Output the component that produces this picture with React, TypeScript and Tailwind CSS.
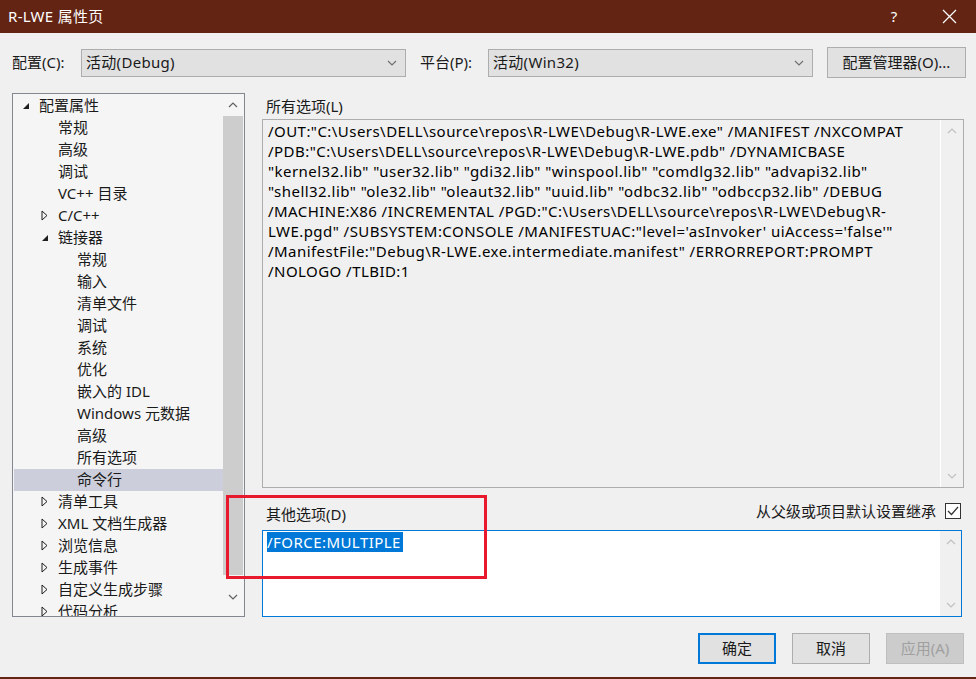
import React from "react";

type TreeItem = {
  label: string;
  level: 0 | 1 | 2;
  expander?: "open" | "closed";
  selected?: boolean;
};

const treeItems: TreeItem[] = [
  { label: "配置属性", level: 0, expander: "open" },
  { label: "常规", level: 1 },
  { label: "高级", level: 1 },
  { label: "调试", level: 1 },
  { label: "VC++ 目录", level: 1 },
  { label: "C/C++", level: 1, expander: "closed" },
  { label: "链接器", level: 1, expander: "open" },
  { label: "常规", level: 2 },
  { label: "输入", level: 2 },
  { label: "清单文件", level: 2 },
  { label: "调试", level: 2 },
  { label: "系统", level: 2 },
  { label: "优化", level: 2 },
  { label: "嵌入的 IDL", level: 2 },
  { label: "Windows 元数据", level: 2 },
  { label: "高级", level: 2 },
  { label: "所有选项", level: 2 },
  { label: "命令行", level: 2, selected: true },
  { label: "清单工具", level: 1, expander: "closed" },
  { label: "XML 文档生成器", level: 1, expander: "closed" },
  { label: "浏览信息", level: 1, expander: "closed" },
  { label: "生成事件", level: 1, expander: "closed" },
  { label: "自定义生成步骤", level: 1, expander: "closed" },
  { label: "代码分析", level: 1, expander: "closed" },
];

const indent = ["pl-[8px]", "pl-[27px]", "pl-[46px]"];

const allOptions = [
  '/OUT:"C:\\Users\\DELL\\source\\repos\\R-LWE\\Debug\\R-LWE.exe" /MANIFEST /NXCOMPAT',
  '/PDB:"C:\\Users\\DELL\\source\\repos\\R-LWE\\Debug\\R-LWE.pdb" /DYNAMICBASE',
  '"kernel32.lib" "user32.lib" "gdi32.lib" "winspool.lib" "comdlg32.lib" "advapi32.lib"',
  '"shell32.lib" "ole32.lib" "oleaut32.lib" "uuid.lib" "odbc32.lib" "odbccp32.lib" /DEBUG',
  '/MACHINE:X86 /INCREMENTAL /PGD:"C:\\Users\\DELL\\source\\repos\\R-LWE\\Debug\\R-',
  "LWE.pgd\" /SUBSYSTEM:CONSOLE /MANIFESTUAC:\"level='asInvoker' uiAccess='false'\"",
  '/ManifestFile:"Debug\\R-LWE.exe.intermediate.manifest" /ERRORREPORT:PROMPT',
  "/NOLOGO /TLBID:1",
];

const Chevron = ({ dir, color = "#606060" }: { dir: "up" | "down"; color?: string }) => (
  <svg width="10" height="6" viewBox="0 0 10 6">
    <polyline
      points={dir === "up" ? "1,5 5,1 9,5" : "1,1 5,5 9,1"}
      fill="none"
      stroke={color}
      strokeWidth="1.2"
    />
  </svg>
);

const Expander = ({ kind }: { kind: "open" | "closed" }) =>
  kind === "open" ? (
    <svg width="8" height="8" viewBox="0 0 8 8">
      <polygon points="7,1 7,7 1,7" fill="#1e1e1e" />
    </svg>
  ) : (
    <svg width="7" height="11" viewBox="0 0 7 11">
      <polygon points="1,1 6,5.5 1,10" fill="none" stroke="#1e1e1e" strokeWidth="1" />
    </svg>
  );

const ComboBox = ({ value }: { value: string }) => (
  <div className="w-[325px] h-[28px] bg-[#e1e1e1] border border-[#adadad] flex items-center pl-[4px] pr-[8px]">
    <span className="flex-1 tracking-[0.3px]">{value}</span>
    <Chevron dir="down" color="#707070" />
  </div>
);

const App = () => {
  return (
    <div
      className="relative w-[976px] h-[679px] bg-[#f0f0f0] flex flex-col overflow-hidden text-[15px] text-[#1a1a1a] border-b-2 border-[#632414]"
      style={{ fontFamily: '"Noto Sans", "Noto Sans CJK SC", sans-serif' }}
    >
      {/* Title bar */}
      <div className="h-[33px] shrink-0 bg-[#632414] flex items-center pl-[8px] pb-[1px] text-white">
        <span className="flex-1 tracking-[0.3px]">R-LWE 属性页</span>
        <span className="w-[14px] text-center mr-[41px]">?</span>
        <svg width="15" height="15" viewBox="0 0 15 15" className="mr-[19px]">
          <path d="M1 1 L14 14 M14 1 L1 14" stroke="#ffffff" strokeWidth="1.2" />
        </svg>
      </div>

      {/* Configuration row */}
      <div className="mt-[14px] h-[31px] flex items-center pl-[12px]">
        <span className="w-[69px]">配置(C):</span>
        <ComboBox value="活动(Debug)" />
        <span className="ml-[14px] w-[68px]">平台(P):</span>
        <ComboBox value="活动(Win32)" />
        <button className="ml-[14px] w-[139px] h-[31px] bg-[#e1e1e1] border border-[#adadad]">
          配置管理器(O)...
        </button>
      </div>

      {/* Main area */}
      <div className="mt-[15px] flex pl-[12px]">
        {/* Tree */}
        <div className="w-[233px] h-[524px] border border-[#828790] bg-[#f5f5f5] flex overflow-hidden">
          <div className="flex-1 pt-[1px] pl-[1px]">
            {treeItems.map((item, i) => (
              <div
                key={i}
                className={`h-[22px] flex items-center whitespace-nowrap pb-[1px] ${indent[item.level]} ${
                  item.selected ? "bg-[#cccedb]" : ""
                }`}
              >
                <div className="w-[17px] flex items-center">
                  {item.expander && <Expander kind={item.expander} />}
                </div>
                <span>{item.label}</span>
              </div>
            ))}
          </div>
          <div className="w-[20px] mr-[1px] flex flex-col">
            <div className="h-[22px] flex items-center justify-center">
              <Chevron dir="up" />
            </div>
            <div className="h-[459px] bg-[#cdcdcd]" />
            <div className="flex-1 flex items-center justify-center pt-[2px]">
              <Chevron dir="down" />
            </div>
          </div>
        </div>

        {/* Right column */}
        <div className="ml-[17px] w-[702px] flex flex-col">
          <div className="h-[26px] pl-[4px] flex items-center">所有选项(L)</div>
          <div className="h-[369px] border border-[#adadad] flex">
            <div className="flex-1 pl-[5px] pt-[1px] leading-[20px] text-black tracking-[0.45px]">
              {allOptions.map((line, i) => (
                <div key={i} className="whitespace-nowrap">
                  {line}
                </div>
              ))}
            </div>
            <div className="w-[23px] border-l border-white flex flex-col justify-between py-[8px] items-center">
              <Chevron dir="up" color="#c0c0c0" />
              <Chevron dir="down" color="#c0c0c0" />
            </div>
          </div>

          <div className="h-[42px] flex items-end pb-[5px] relative">
            <span className="pl-[4px] flex-1">其他选项(D)</span>
            <div className="absolute right-[3px] top-[12px] flex items-center gap-[9px]">
              <span>从父级或项目默认设置继承</span>
              <div className="w-[16px] h-[16px] border border-[#333333] bg-white flex items-center justify-center">
                <svg width="12" height="10" viewBox="0 0 12 10">
                  <polyline points="1,5 4.5,8.5 11,1" fill="none" stroke="#333333" strokeWidth="1.3" />
                </svg>
              </div>
            </div>
          </div>

          <div className="h-[87px] w-[700px] border border-[#0078d7] bg-white flex">
            <div className="flex-1 pl-[4px] pt-[2px] leading-[19px] tracking-[0.45px]">
              <span className="bg-[#0078d7] text-white pr-[2px]">/FORCE:MULTIPLE</span>
            </div>
            <div className="w-[21px] bg-[#f0f0f0] flex flex-col justify-between py-[8px] items-center">
              <Chevron dir="up" color="#c0c0c0" />
              <Chevron dir="down" color="#c0c0c0" />
            </div>
          </div>
        </div>
      </div>

      {/* Buttons */}
      <div className="mt-[16px] flex justify-end gap-[16px] pr-[12px]">
        <button className="w-[78px] h-[31px] bg-[#e1e1e1] border-2 border-[#0078d7]">确定</button>
        <button className="w-[78px] h-[31px] bg-[#e1e1e1] border border-[#adadad]">取消</button>
        <button className="w-[78px] h-[31px] bg-[#cccccc] border border-[#bfbfbf] text-[#a0a0a0]">
          应用(A)
        </button>
      </div>

      {/* Annotation box */}
      <div className="absolute left-[226px] top-[495px] w-[261px] h-[84px] border-[3px] border-[#e8192c]" />
    </div>
  );
};

export default App;
